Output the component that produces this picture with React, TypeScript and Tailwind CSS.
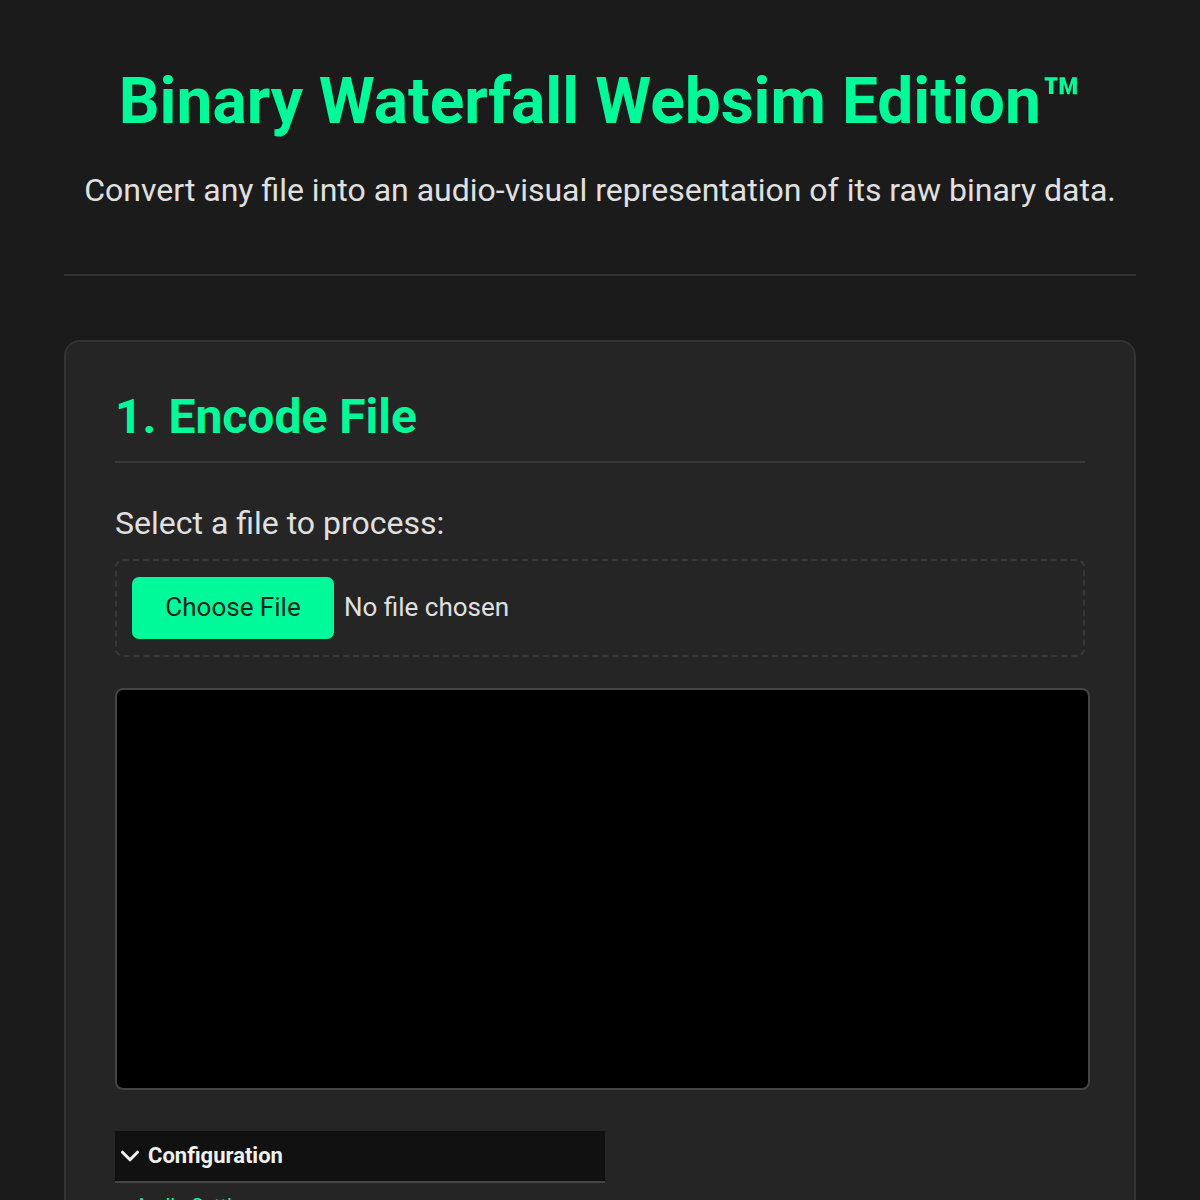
import { ChevronDown } from "lucide-react";

export default function App() {
  return (
    <div className="min-h-screen bg-[#1b1b1b] text-[#e0e0e0] font-['Roboto',sans-serif]">
      <div className="mx-auto w-[1072px] pt-[64px]">
        <header className="text-center pb-[63px] border-b-2 border-[#333]">
          <h1 className="text-[64px] leading-[1.2] font-bold text-[#00fa9a]">Binary Waterfall Websim Edition™</h1>
          <p className="mt-[29px] text-[32px] leading-[1.3]">
            Convert any file into an audio-visual representation of its raw binary data.
          </p>
        </header>

        <section className="mt-[64px] rounded-[16px] border-2 border-[#333] bg-[#252525] px-[49px] pt-[46px] pb-[60px]">
          <h2 className="text-[48px] leading-[1.2] font-bold text-[#00fa9a] pb-[15px] border-b-2 border-[#383838]">
            1. Encode File
          </h2>

          <label className="block mt-[40px] text-[32px] leading-[1.3]">Select a file to process:</label>

          <div className="mt-[14px] flex items-center gap-[10px] rounded-[8px] border-2 border-dashed border-[#363636] px-[15px] py-[16px]">
            <button className="h-[62px] w-[202px] rounded-[7px] bg-[#00fa9a] text-[26px] text-[#0c2a1d]">
              Choose File
            </button>
            <span className="text-[26px]">No file chosen</span>
          </div>

          <div className="mt-[31px] w-[975px] h-[402px] rounded-[8px] border-2 border-[#444] bg-black" />

          <details open className="mt-[41px] w-[490px] bg-[#252525]">
            <summary className="list-none flex items-center gap-[3px] h-[52px] px-0 bg-[#111] border-b-2 border-[#444] text-[22px] font-bold text-[#f0f0f0] cursor-pointer">
              <ChevronDown className="w-[30px] h-[30px]" strokeWidth={2.5} />
              Configuration
            </summary>
            <div className="px-[20px] pt-[8px] pb-[20px]">
              <label className="block text-[20px] leading-[1.5] text-[#00fa9a]">Audio Settings</label>
              <div className="mt-[10px] h-[40px] rounded-[6px] bg-[#1b1b1b]" />
            </div>
          </details>
        </section>
      </div>
    </div>
  );
}
